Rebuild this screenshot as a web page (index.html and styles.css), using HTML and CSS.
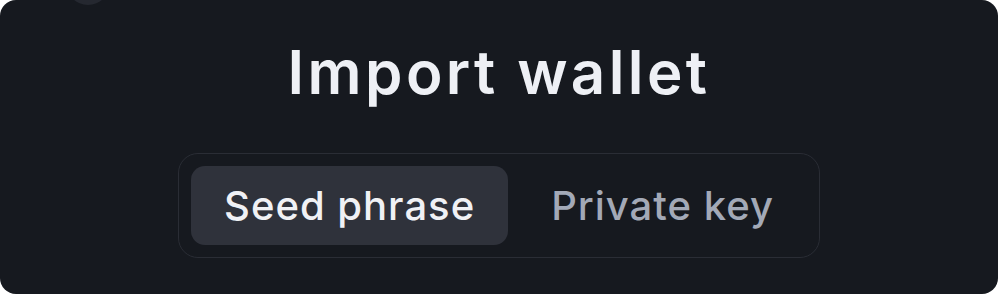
FILE: index.html
```html
<!DOCTYPE html>
<html lang="en">
<head>
  <meta charset="UTF-8" />
  <title>Import wallet</title>
  <link rel="stylesheet" href="styles.css">
</head>
<body>
  <div class="card">
    <div class="back-btn" aria-hidden="true"></div>
    <h1 class="title">Import wallet</h1>
    <div class="tabs" role="tablist">
      <button class="tab active" role="tab">Seed phrase</button>
      <button class="tab" role="tab">Private key</button>
    </div>
  </div>
</body>
</html>
```

FILE: styles.css
```css
body {
  margin: 0;
  background: #ffffff;
  font-family: Inter, 'Noto Sans', sans-serif;
}

.card {
  position: relative;
  width: 998px;
  height: 294px;
  background: #16191f;
  border-radius: 16px;
  overflow: hidden;
  display: flex;
  flex-direction: column;
  align-items: center;
  box-sizing: border-box;
  padding-top: 36px;
}

.back-btn {
  position: absolute;
  left: 66px;
  top: -39px;
  width: 44px;
  height: 44px;
  border-radius: 50%;
  background: #252830;
}

.title {
  margin: 0;
  color: #eef0f5;
  font-size: 60px;
  font-weight: 600;
  line-height: 72px;
  letter-spacing: 3.4px;
}

.tabs {
  margin-top: 45px;
  display: flex;
  gap: 10px;
  padding: 12px;
  border: 1px solid #2a2d35;
  border-radius: 20px;
}

.tab {
  font-family: inherit;
  font-size: 40px;
  font-weight: 500;
  letter-spacing: 1px;
  height: 79px;
  padding: 0 33px;
  border: none;
  border-radius: 14px;
  background: transparent;
  color: #a3a9b7;
  cursor: pointer;
}

.tab.active {
  background: #2f323b;
  color: #f0f1f5;
}
```
